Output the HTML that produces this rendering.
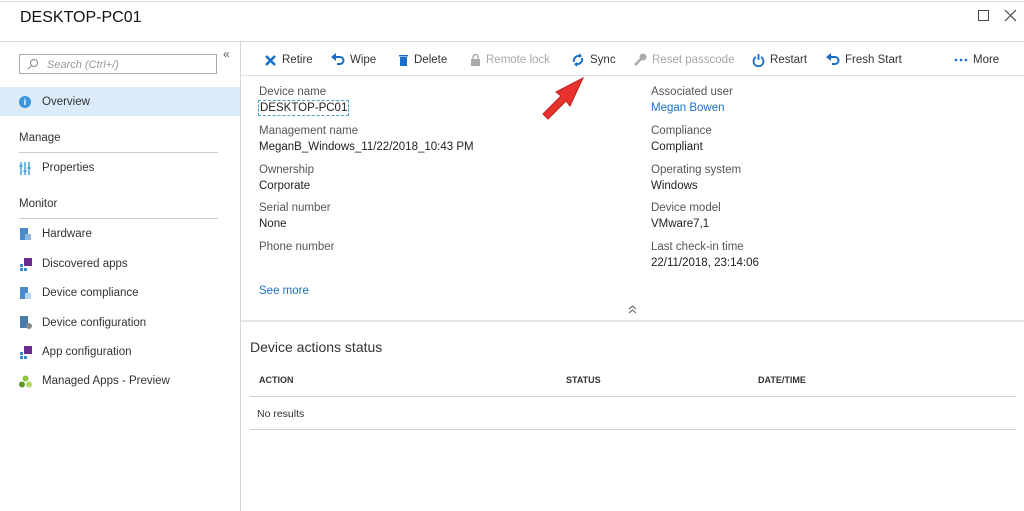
<!DOCTYPE html>
<html><head><meta charset="utf-8"><style>
*{margin:0;padding:0;box-sizing:border-box}
body{width:1024px;height:511px;background:#fff;font-family:"Liberation Sans",sans-serif;color:#333;position:relative;overflow:hidden;font-size:11.5px;line-height:16px}
.a{position:absolute;white-space:nowrap}
.lbl{color:#555}
.val{color:#222}
.link{color:#1a6fc9}
.tb{position:absolute;top:50px;height:20px;font-size:11.5px;color:#333;display:flex;align-items:center;gap:5px}
.tb svg{flex:none}
.dis{color:#a6a6a6}
.nav{position:absolute;left:42px;font-size:11.5px;color:#333}
.ic{position:absolute;left:19px;width:13px;height:13px}
</style></head><body>
<div class="a" style="left:0;top:1px;width:1024px;height:1px;background:#e0e0e0"></div>
<div class="a" style="left:20px;top:8px;font-size:16px;line-height:20px;color:#111">DESKTOP-PC01</div>
<div class="a" style="left:978px;top:10px;width:11px;height:11px;border:1px solid #444"></div>
<svg class="a" style="left:1004px;top:9px" width="13" height="13"><path d="M1 1L12 12M12 1L1 12" stroke="#444" stroke-width="1.2"/></svg>
<div class="a" style="left:0;top:41px;width:1024px;height:1px;background:#d6d6d6"></div>
<div class="a" style="left:240px;top:42px;width:1px;height:469px;background:#d6d6d6"></div>
<!-- sidebar -->
<div class="a" style="left:19px;top:54px;width:198px;height:20px;border:1px solid #a8a8a8"></div>
<svg class="a" style="left:27px;top:58px" width="12" height="12"><circle cx="7" cy="5" r="3.5" fill="none" stroke="#888"/><path d="M4.5 7.5L1 11" stroke="#888"/></svg>
<div class="a" style="left:47px;top:57px;font-style:italic;color:#999;font-size:11px">Search (Ctrl+/)</div>
<div class="a" style="left:223px;top:46px;color:#555;font-size:12px">«</div>
<div class="a" style="left:0;top:87px;width:240px;height:29px;background:#dcebf8"></div>
<div class="a" style="left:19px;top:96px;width:12px;height:12px;border-radius:50%;background:#3a96dd;color:#fff;font-size:9px;text-align:center;line-height:12px;font-weight:bold">i</div>
<div class="nav" style="top:94px">Overview</div>
<div class="a" style="left:19px;top:130px;color:#333">Manage</div>
<div class="a" style="left:19px;top:152px;width:199px;height:1px;background:#ccc"></div>
<svg class="ic" style="top:162px" width="13" height="13"><g stroke="#4aa0d8" stroke-width="1.5"><path d="M2 0V13M6 0V13M10 0V13"/></g><g fill="#4aa0d8"><rect x="0.5" y="3" width="3" height="2"/><rect x="4.5" y="8" width="3" height="2"/><rect x="8.5" y="5" width="3" height="2"/></g></svg>
<div class="nav" style="top:160px">Properties</div>
<div class="a" style="left:19px;top:196px;color:#333">Monitor</div>
<div class="a" style="left:19px;top:218px;width:199px;height:1px;background:#ccc"></div>
<svg class="ic" style="top:228px"><rect x="1" y="0" width="8" height="12" fill="#4a8ac8"/><rect x="6" y="6" width="6" height="6" fill="#8cb8e0"/></svg>
<div class="nav" style="top:226px">Hardware</div>
<svg class="ic" style="top:258px"><rect x="5" y="0" width="8" height="8" fill="#6b2e8c"/><rect x="1" y="6" width="3" height="3" fill="#3a8ad0"/><rect x="1" y="10" width="3" height="3" fill="#3a8ad0"/><rect x="5" y="10" width="3" height="3" fill="#3a8ad0"/></svg>
<div class="nav" style="top:256px">Discovered apps</div>
<svg class="ic" style="top:287px"><rect x="1" y="0" width="8" height="12" fill="#4a8ac8"/><rect x="6" y="6" width="6" height="6" fill="#b8d6f0"/></svg>
<div class="nav" style="top:285px">Device compliance</div>
<svg class="ic" style="top:316px"><rect x="1" y="0" width="8" height="12" fill="#4a7aa8"/><circle cx="10" cy="10" r="3" fill="#888"/></svg>
<div class="nav" style="top:315px">Device configuration</div>
<svg class="ic" style="top:346px"><rect x="5" y="0" width="8" height="8" fill="#6b2e8c"/><rect x="1" y="6" width="3" height="3" fill="#3a8ad0"/><rect x="1" y="10" width="3" height="3" fill="#3a8ad0"/><rect x="5" y="10" width="3" height="3" fill="#3a8ad0"/></svg>
<div class="nav" style="top:344px">App configuration</div>
<svg class="ic" style="top:375px"><circle cx="6.5" cy="3.5" r="3" fill="#8cc63f"/><circle cx="3" cy="9.5" r="3" fill="#5a9a2a"/><circle cx="10" cy="9.5" r="3" fill="#b0d860"/></svg>
<div class="nav" style="top:373px">Managed Apps - Preview</div>
<!-- toolbar -->
<div class="tb" style="left:264px"><svg width="13" height="13"><path d="M2 2L11 11M11 2L2 11" stroke="#1a6fc9" stroke-width="2.5"/></svg>Retire</div>
<div class="tb" style="left:331px"><svg width="14" height="14"><path d="M3 4H9a3.5 3.5 0 010 7H6" stroke="#1a6fc9" stroke-width="2" fill="none"/><path d="M0 4L5 0V8Z" fill="#1a6fc9"/></svg>Wipe</div>
<div class="tb" style="left:398px"><svg width="11" height="12"><rect x="1" y="1" width="9" height="1.5" fill="#1a6fc9"/><rect x="2" y="3" width="7" height="9" fill="#1a6fc9"/></svg>Delete</div>
<div class="tb dis" style="left:470px"><svg width="11" height="12"><rect x="1" y="5" width="9" height="7" fill="#aaa"/><path d="M3 5V3a2.5 2.5 0 015 0v2" stroke="#aaa" stroke-width="1.5" fill="none"/></svg>Remote lock</div>
<div class="tb" style="left:571px"><svg width="14" height="14"><path d="M3 9a5 5 0 016-6M11 5a5 5 0 01-6 6" stroke="#1a6fc9" stroke-width="2" fill="none"/><path d="M8 0l3 3-3 2z M6 14l-3-3 3-2z" fill="#1a6fc9"/></svg>Sync</div>
<div class="tb dis" style="left:633px"><svg width="14" height="14"><circle cx="10" cy="4" r="3.5" fill="#aaa"/><path d="M8 6L2 12" stroke="#aaa" stroke-width="2.5"/></svg>Reset passcode</div>
<div class="tb" style="left:752px"><svg width="13" height="13"><path d="M4 3a5 5 0 105 0" stroke="#1a6fc9" stroke-width="1.8" fill="none"/><path d="M6.5 0V6" stroke="#1a6fc9" stroke-width="1.8"/></svg>Restart</div>
<div class="tb" style="left:826px"><svg width="14" height="14"><path d="M3 4H9a3.5 3.5 0 010 7H6" stroke="#1a6fc9" stroke-width="2" fill="none"/><path d="M0 4L5 0V8Z" fill="#1a6fc9"/></svg>Fresh Start</div>
<div class="tb" style="left:954px"><svg width="14" height="4"><circle cx="2" cy="2" r="1.3" fill="#1a6fc9"/><circle cx="7" cy="2" r="1.3" fill="#1a6fc9"/><circle cx="12" cy="2" r="1.3" fill="#1a6fc9"/></svg>More</div>
<div class="a" style="left:241px;top:75px;width:783px;height:1px;background:#e0e0e0"></div>
<!-- arrow -->
<svg class="a" style="left:540px;top:74px" width="50" height="50"><path d="M43 4L30 32 26 27 8 45 3 40 21 22 16 18Z" fill="#e8322d" stroke="#c02020" stroke-width="1"/></svg>
<!-- details -->
<div class="a lbl" style="left:259px;top:84px">Device name</div>
<div class="a val" style="left:258px;top:100px;border:1px dashed #4aa0c8;padding:0 1px;line-height:14px">DESKTOP-PC01</div>
<div class="a lbl" style="left:259px;top:123px">Management name</div>
<div class="a val" style="left:259px;top:139px">MeganB_Windows_11/22/2018_10:43 PM</div>
<div class="a lbl" style="left:259px;top:162px">Ownership</div>
<div class="a val" style="left:259px;top:178px">Corporate</div>
<div class="a lbl" style="left:259px;top:200px">Serial number</div>
<div class="a val" style="left:259px;top:216px">None</div>
<div class="a lbl" style="left:259px;top:239px">Phone number</div>
<div class="a link" style="left:259px;top:283px">See more</div>
<div class="a lbl" style="left:651px;top:84px">Associated user</div>
<div class="a link" style="left:651px;top:100px">Megan Bowen</div>
<div class="a lbl" style="left:651px;top:123px">Compliance</div>
<div class="a val" style="left:651px;top:139px">Compliant</div>
<div class="a lbl" style="left:651px;top:162px">Operating system</div>
<div class="a val" style="left:651px;top:178px">Windows</div>
<div class="a lbl" style="left:651px;top:200px">Device model</div>
<div class="a val" style="left:651px;top:216px">VMware7,1</div>
<div class="a lbl" style="left:651px;top:239px">Last check-in time</div>
<div class="a val" style="left:651px;top:255px">22/11/2018, 23:14:06</div>
<svg class="a" style="left:628px;top:305px" width="9" height="9"><path d="M1 4L4.5 1 8 4M1 8L4.5 5 8 8" stroke="#555" fill="none"/></svg>
<div class="a" style="left:241px;top:320px;width:783px;height:2px;background:#e4e4e4"></div>
<div class="a" style="left:250px;top:338px;font-size:14px;line-height:18px;color:#333">Device actions status</div>
<div class="a" style="left:259px;top:372px;font-size:9px;font-weight:bold;color:#333">ACTION</div>
<div class="a" style="left:566px;top:372px;font-size:9px;font-weight:bold;color:#333">STATUS</div>
<div class="a" style="left:758px;top:372px;font-size:9px;font-weight:bold;color:#333">DATE/TIME</div>
<div class="a" style="left:250px;top:396px;width:766px;height:1px;background:#d0d0d0"></div>
<div class="a" style="left:257px;top:406px;font-size:10.5px;color:#333">No results</div>
<div class="a" style="left:250px;top:429px;width:766px;height:1px;background:#d0d0d0"></div>
</body></html>
